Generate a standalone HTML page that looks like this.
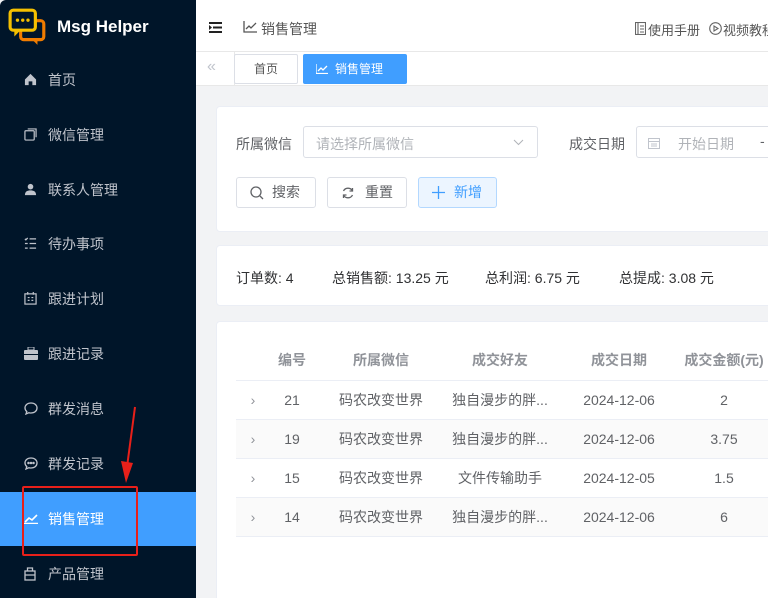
<!DOCTYPE html><html><head><meta charset="utf-8"><style>
*{box-sizing:border-box;margin:0;padding:0}
html,body{width:768px;height:598px;overflow:hidden}
body{background:#f2f3f5;font-family:"Liberation Sans","Noto Sans CJK SC",sans-serif;position:relative;color:#606266}
.sb{position:absolute;left:0;top:0;width:196px;height:598px;background:#001529;border-top-left-radius:6px}
.logo{position:absolute;left:8px;top:8px}
.brand{position:absolute;left:57px;top:17px;color:#fff;font-weight:bold;font-size:17px}
.mi{position:absolute;left:0;width:196px;height:54px;color:#c0c4cc;font-size:14px;line-height:54px;padding-left:48px}
.mi svg{position:absolute;left:24px;top:20px}
.mi.act{background:#409eff;color:#fff}
.hd{position:absolute;left:196px;top:0;right:0;height:52px;background:#fff;border-bottom:1px solid #e8e8e8}
.tb{position:absolute;left:196px;top:52px;right:0;height:34px;background:#fff;border-bottom:1px solid #e8e8e8}
.card{position:absolute;left:216px;right:-10px;background:#fff;border:1px solid #ebeef5;border-radius:4px}
.btn{position:absolute;height:31px;border:1px solid #dcdfe6;border-radius:3px;font-size:14px;line-height:29px;color:#606266;background:#fff}
.t{position:absolute;font-size:14px;white-space:nowrap}
.row{position:absolute;left:236px;right:0;height:39px;border-bottom:1px solid #ebeef5}
.row span{position:absolute;top:0;line-height:38px;font-size:14px;color:#606266;transform:translateX(-50%);white-space:nowrap}
</style></head><body>
<div class="sb">
<svg class="logo" width="40" height="38" viewBox="0 0 38 36"><rect x="12" y="12" width="22" height="18" rx="3" fill="none" stroke="#f07c00" stroke-width="3"/><path d="M28 30 v5 l-5-5" fill="#f07c00"/><rect x="2" y="2" width="24" height="19" rx="3" fill="#001529" stroke="#f5c000" stroke-width="3"/><path d="M6 21 v6 l6-6" fill="#f5c000"/><circle cx="9" cy="11.5" r="1.6" fill="#f5c000"/><circle cx="14" cy="11.5" r="1.6" fill="#f5c000"/><circle cx="19" cy="11.5" r="1.6" fill="#f5c000"/></svg>
<div class="brand">Msg Helper</div>
<div class="mi" style="top:53px"><svg width="13" height="13" viewBox="0 0 14 14"><path d="M1 7L7 1l6 6v6H9V9H5v4H1z" fill="#c0c4cc"/></svg>首页</div>
<div class="mi" style="top:108px"><svg width="13" height="13" viewBox="0 0 14 14" fill="none" stroke="#c0c4cc" stroke-width="1.3"><rect x="1" y="3" width="10" height="10" rx="1"/><path d="M4 1h9v9"/></svg>微信管理</div>
<div class="mi" style="top:163px"><svg width="13" height="13" viewBox="0 0 14 14" fill="#c0c4cc"><circle cx="7" cy="4" r="3"/><path d="M1 13c0-4 3-5 6-5s6 1 6 5z"/></svg>联系人管理</div>
<div class="mi" style="top:217px"><svg width="13" height="13" viewBox="0 0 14 14" fill="none" stroke="#c0c4cc" stroke-width="1.4"><path d="M1 2l1 1 2-2M6 2h7M1 7h3M6 7h7M1 12h3M6 12h7"/></svg>待办事项</div>
<div class="mi" style="top:272px"><svg width="13" height="13" viewBox="0 0 14 14" fill="none" stroke="#c0c4cc" stroke-width="1.3"><rect x="1" y="2" width="12" height="11"/><path d="M4 6h2M8 6h2M4 9h2M8 9h2M4 0v3M10 0v3"/></svg>跟进计划</div>
<div class="mi" style="top:327px"><svg width="14" height="13" viewBox="0 0 14 13" fill="#c0c4cc"><rect x="0" y="3" width="14" height="10" rx="1"/><rect x="4" y="0" width="6" height="3" fill="none" stroke="#c0c4cc"/><rect x="0" y="7" width="14" height="1" fill="#001529"/></svg>跟进记录</div>
<div class="mi" style="top:382px"><svg width="14" height="13" viewBox="0 0 14 13" fill="none" stroke="#c0c4cc" stroke-width="1.3"><path d="M7 1C3.5 1 1 3 1 6c0 1.5.7 2.7 1.8 3.6L2 12l3-1.3c.6.2 1.3.3 2 .3 3.5 0 6-2 6-5S10.5 1 7 1z"/></svg>群发消息</div>
<div class="mi" style="top:437px"><svg width="14" height="13" viewBox="0 0 14 13" fill="none" stroke="#c0c4cc" stroke-width="1.3"><path d="M7 1C3.5 1 1 3 1 6c0 1.5.7 2.7 1.8 3.6L2 12l3-1.3c.6.2 1.3.3 2 .3 3.5 0 6-2 6-5S10.5 1 7 1z"/><circle cx="4.5" cy="6" r=".6"/><circle cx="7" cy="6" r=".6"/><circle cx="9.5" cy="6" r=".6"/></svg>群发记录</div>
<div class="mi act" style="top:492px"><svg width="14" height="12" viewBox="0 0 14 12" fill="none" stroke="#fff" stroke-width="1.6"><path d="M1 10l4-4 3 2 5-5M0 11.5h14"/></svg>销售管理</div>
<div class="mi" style="top:547px"><svg width="12" height="14" viewBox="0 0 12 14" fill="none" stroke="#c0c4cc" stroke-width="1.3"><rect x="1" y="4" width="10" height="9"/><path d="M3.5 4V1h5v3M1 8h10"/></svg>产品管理</div>
</div>
<div style="position:absolute;left:22px;top:486px;width:116px;height:70px;border:2px solid #e8201a;border-radius:2px"></div>
<svg style="position:absolute;left:118px;top:405px" width="22" height="80"><path d="M17 2L9 62" stroke="#e8201a" stroke-width="2"/><path d="M3 56L8 78 15 58z" fill="#e8201a"/></svg>
<div class="hd">
<svg style="position:absolute;left:13px;top:22px" width="13" height="11" viewBox="0 0 13 11" fill="#222"><rect y="0" width="13" height="2"/><rect x="4" y="4.5" width="9" height="2"/><rect y="9" width="13" height="2"/><path d="M0 3l3 2.5L0 8z"/></svg>
<svg style="position:absolute;left:47px;top:21px" width="14" height="12" viewBox="0 0 14 12" fill="none" stroke="#555" stroke-width="1.3"><path d="M1 0v11h13M3 8l3-3 2 2 5-5"/></svg>
<div class="t" style="left:65px;top:19px;font-size:14px;color:#555">销售管理</div>
<svg style="position:absolute;left:439px;top:22px" width="11" height="13" viewBox="0 0 11 13" fill="none" stroke="#666" stroke-width="1.1"><rect x=".5" y=".5" width="10" height="12"/><path d="M3 .5v12M5 4h4M5 7h4M5 10h4"/></svg>
<div class="t" style="left:452px;top:20px;font-size:13px;color:#555">使用手册</div>
<svg style="position:absolute;left:513px;top:22px" width="13" height="13" viewBox="0 0 13 13" fill="none" stroke="#666" stroke-width="1.1"><circle cx="6.5" cy="6.5" r="5.8"/><path d="M5 4v5l4-2.5z"/></svg>
<div class="t" style="left:527px;top:20px;font-size:13px;color:#555">视频教程</div>
</div>
<div class="tb">
<div class="t" style="left:11px;top:6px;color:#c0c4cc;font-size:16px">«</div>
<div style="position:absolute;left:38px;top:0;width:1px;height:34px;background:#e8e8e8"></div>
<div style="position:absolute;left:38px;top:2px;width:64px;height:30px;border:1px solid #dcdfe6;border-radius:2px;font-size:12px;line-height:28px;text-align:center;color:#555">首页</div>
<div style="position:absolute;left:107px;top:2px;width:104px;height:30px;background:#409eff;border-radius:2px;font-size:12px;line-height:30px;color:#fff;padding-left:32px"><svg style="position:absolute;left:13px;top:10px" width="12" height="10" viewBox="0 0 12 10" fill="none" stroke="#fff" stroke-width="1.3"><path d="M0 0v9.5h12M2 7l3-3 2 2 4-4"/></svg>销售管理</div>
</div>
<div class="card" style="top:106px;height:126px">
<div class="t" style="left:19px;top:27px;color:#606266">所属微信</div>
<div style="position:absolute;left:86px;top:19px;width:235px;height:32px;border:1px solid #dcdfe6;border-radius:3px"><div class="t" style="left:12px;top:7px;color:#b0b3b8">请选择所属微信</div><svg style="position:absolute;right:13px;top:12px" width="11" height="7"><path d="M1 1l4.5 4.5L10 1" fill="none" stroke="#b0b3b8"/></svg></div>
<div class="t" style="left:352px;top:27px;color:#606266">成交日期</div>
<div style="position:absolute;left:419px;top:19px;width:200px;height:32px;border:1px solid #dcdfe6;border-radius:3px"><svg style="position:absolute;left:11px;top:10px" width="12" height="12" fill="none" stroke="#c0c4cc"><rect x=".5" y="1.5" width="11" height="10"/><path d="M1 4.5h10M3 7h6M3 9h6"/></svg><div class="t" style="left:41px;top:7px;color:#b0b3b8">开始日期</div><div class="t" style="left:123px;top:6px;color:#606266">-</div></div>
<div class="btn" style="left:19px;top:70px;width:80px;padding-left:35px"><svg style="position:absolute;left:13px;top:8px" width="14" height="14" fill="none" stroke="#606266" stroke-width="1.3"><circle cx="6" cy="6" r="5"/><path d="M10 10l3 3"/></svg>搜索</div>
<div class="btn" style="left:110px;top:70px;width:80px;padding-left:37px"><svg style="position:absolute;left:14px;top:9px" width="12" height="12" fill="none" stroke="#606266" stroke-width="1.3"><path d="M10.5 4A5 5 0 0 0 1.5 4M1.5 8A5 5 0 0 0 10.5 8"/><path d="M10.5 1v3h-3M1.5 11V8h3"/></svg>重置</div>
<div class="btn" style="left:201px;top:70px;width:79px;padding-left:35px;background:#ecf5ff;border-color:#b3d8ff;color:#409eff"><svg style="position:absolute;left:13px;top:8px" width="13" height="13" stroke="#409eff" stroke-width="1.3"><path d="M6.5 0v13M0 6.5h13"/></svg>新增</div>
</div>
<div class="card" style="top:245px;height:61px">
<div class="t" style="left:19px;top:22px;color:#303133">订单数: 4</div>
<div class="t" style="left:115px;top:22px;color:#303133">总销售额: 13.25 元</div>
<div class="t" style="left:268px;top:22px;color:#303133">总利润: 6.75 元</div>
<div class="t" style="left:402px;top:22px;color:#303133">总提成: 3.08 元</div>
</div>
<div class="card" style="top:321px;height:290px"></div>
<div class="row" style="top:341px;height:40px"><span style="left:56px;color:#909399;font-weight:bold">编号</span><span style="left:145px;color:#909399;font-weight:bold">所属微信</span><span style="left:264px;color:#909399;font-weight:bold">成交好友</span><span style="left:383px;color:#909399;font-weight:bold">成交日期</span><span style="left:488px;color:#909399;font-weight:bold">成交金额(元)</span></div>
<div class="row" style="top:381px"><span style="left:17px;color:#909399">›</span><span style="left:56px">21</span><span style="left:145px">码农改变世界</span><span style="left:264px">独自漫步的胖...</span><span style="left:383px">2024-12-06</span><span style="left:488px">2</span></div>
<div class="row" style="top:420px;background:#fafafa"><span style="left:17px;color:#909399">›</span><span style="left:56px">19</span><span style="left:145px">码农改变世界</span><span style="left:264px">独自漫步的胖...</span><span style="left:383px">2024-12-06</span><span style="left:488px">3.75</span></div>
<div class="row" style="top:459px"><span style="left:17px;color:#909399">›</span><span style="left:56px">15</span><span style="left:145px">码农改变世界</span><span style="left:264px">文件传输助手</span><span style="left:383px">2024-12-05</span><span style="left:488px">1.5</span></div>
<div class="row" style="top:498px;background:#fafafa"><span style="left:17px;color:#909399">›</span><span style="left:56px">14</span><span style="left:145px">码农改变世界</span><span style="left:264px">独自漫步的胖...</span><span style="left:383px">2024-12-06</span><span style="left:488px">6</span></div>
</body></html>
